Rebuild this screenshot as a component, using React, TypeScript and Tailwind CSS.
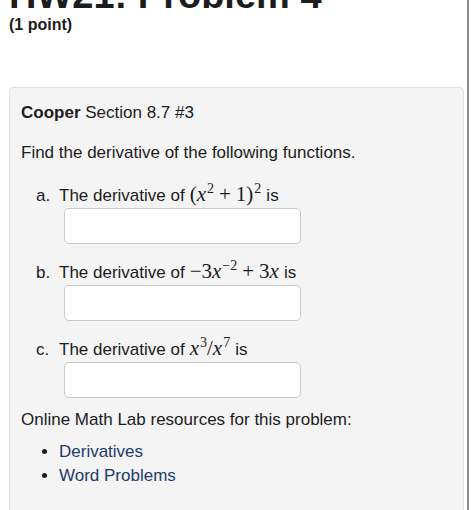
import React from 'react';

const sans = { fontFamily: '"Liberation Sans", Arial, sans-serif' };

// small helpers for the MathJax-looking formulas
const V = ({ children }: { children: React.ReactNode }) => (
  <span className="italic">{children}</span>
);
const Sup = ({ children }: { children: React.ReactNode }) => (
  <sup className="relative top-[-0.6em] ml-[1px] align-baseline text-[14px] not-italic leading-none">{children}</sup>
);
const Op = ({ children }: { children: React.ReactNode }) => (
  <span className="px-[5px]">{children}</span>
);
const M = ({ children }: { children: React.ReactNode }) => (
  <span className="mx-[5px] text-[21px] leading-none" style={{ fontFamily: '"Liberation Serif", "Times New Roman", serif' }}>
    {children}
  </span>
);

const Part = ({ label, children, last }: { label: string; children: React.ReactNode; last?: boolean }) => (
  <div className={last ? 'mb-[10px]' : 'mb-[17px]'}>
    <div className="flex h-[24px] items-baseline leading-[24px]">
      <span className="w-[38px] pl-[15px]">{label}</span>
      <span>The derivative of{children}is</span>
    </div>
    <div className="ml-[43px] h-[36px] w-[237px] rounded-[5px] border border-[#c9c9c9] bg-white" />
  </div>
);

export default function App() {
  return (
    <div className="flex h-[510px] w-[474px] overflow-hidden bg-white text-[#1c1c1c]" style={sans}>
      <div className="w-[467px] pl-[9px] pr-[3px]">
        <h1 className="mt-[-24px] h-[38px] text-[38px] font-bold leading-[38px]">HW21: Problem 4</h1>
        <div className="mt-[1px] text-[16px] font-bold leading-[20px]">(1 point)</div>

        <div className="mt-[52px] rounded-[4px] border border-[#e2e2e2] bg-[#f4f4f4] pl-[11px] pt-[13px] pb-[40px] text-[17px] leading-[24px]">
          <p>
            <b>Cooper</b> Section 8.7 #3
          </p>
          <p className="mt-[16px] mb-[19px]">Find the derivative of the following functions.</p>

          <Part label="a.">
            <M>
              (<V>x</V><Sup>2</Sup>
              <Op>+</Op>1)<Sup>2</Sup>
            </M>
          </Part>
          <Part label="b.">
            <M>
              −3<V>x</V><Sup>−2</Sup>
              <Op>+</Op>3<V>x</V>
            </M>
          </Part>
          <Part label="c." last>
            <M>
              <V>x</V><Sup>3</Sup>/<V>x</V><Sup>7</Sup>
            </M>
          </Part>

          <p>Online Math Lab resources for this problem:</p>
          <ul className="mt-[8px] list-disc pl-[38px] marker:text-[#1c1c1c]">
            <li><a className="text-[#223a6b]">Derivatives</a></li>
            <li><a className="text-[#223a6b]">Word Problems</a></li>
          </ul>
        </div>
      </div>
      <div className="w-[2px] bg-[#8a8a8a]" />
      <div className="flex-1 bg-white" />
    </div>
  );
}
